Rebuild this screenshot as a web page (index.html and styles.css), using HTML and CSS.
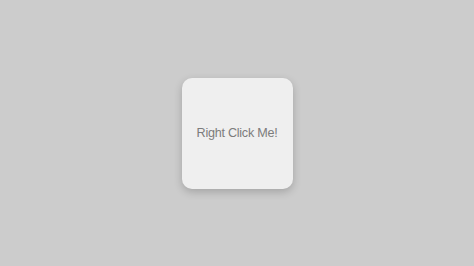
FILE: index.html
```html
<!DOCTYPE html>
<html>
<head>
<meta charset="utf-8">
<link rel="stylesheet" href="styles.css">
</head>
<body>
<div class="stage">
  <div class="card">Right Click Me!</div>
</div>
</body>
</html>
```
FILE: styles.css
```css
html, body {
  margin: 0;
  padding: 0;
  width: 100%;
  height: 100%;
  background: #cccccc;
}
.stage {
  display: flex;
  align-items: center;
  justify-content: center;
  height: 100%;
}
.card {
  width: 111px;
  height: 111px;
  border-radius: 10px;
  background: #efefef;
  box-shadow: 0 3px 8px rgba(0, 0, 0, 0.2);
  display: flex;
  align-items: center;
  justify-content: center;
  font-family: "Liberation Sans", Arial, sans-serif;
  font-size: 12.6px;
  letter-spacing: -0.25px;
  color: #7c7c7c;
}
```
